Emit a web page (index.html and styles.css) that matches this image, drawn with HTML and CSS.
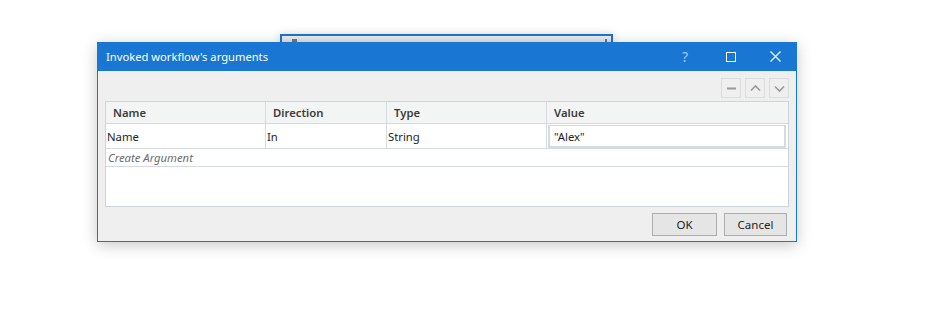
FILE: index.html
```html
<!DOCTYPE html>
<html>
<head>
    <title>Invoked workflow's arguments</title>
    <link rel="stylesheet" href="styles.css">
</head>
<body>
    <div class="back-window">
        <div class="back-inner">
            <span class="back-mark left"></span>
            <span class="back-mark right"></span>
        </div>
    </div>

    <div class="dialog">
        <div class="titlebar">
            <span class="title">Invoked workflow's arguments</span>
            <div class="win-buttons">
                <span class="win-btn help">?</span>
                <span class="win-btn">
                    <svg width="10" height="10" viewBox="0 0 10 10"><rect x="0.5" y="0.5" width="9" height="9" fill="none" stroke="#fff" stroke-width="1"/></svg>
                </span>
                <span class="win-btn">
                    <svg width="11" height="11" viewBox="0 0 11 11"><path d="M0.5 0.5 L10.5 10.5 M10.5 0.5 L0.5 10.5" stroke="#fff" stroke-width="1.1" fill="none"/></svg>
                </span>
            </div>
        </div>

        <div class="content">
            <div class="toolbar">
                <button class="tool-btn">
                    <svg width="11" height="11" viewBox="0 0 11 11"><rect x="1" y="4.5" width="9" height="2" fill="#9a9a9a"/></svg>
                </button>
                <button class="tool-btn">
                    <svg width="11" height="11" viewBox="0 0 11 11"><path d="M1 7.5 L5.5 3 L10 7.5" stroke="#9a9a9a" stroke-width="1.6" fill="none"/></svg>
                </button>
                <button class="tool-btn">
                    <svg width="11" height="11" viewBox="0 0 11 11"><path d="M1 3.5 L5.5 8 L10 3.5" stroke="#9a9a9a" stroke-width="1.6" fill="none"/></svg>
                </button>
            </div>

            <div class="grid">
                <div class="row header">
                    <div class="cell c-name">Name</div>
                    <div class="cell c-dir">Direction</div>
                    <div class="cell c-type">Type</div>
                    <div class="cell c-value">Value</div>
                </div>
                <div class="row data">
                    <div class="cell c-name">Name</div>
                    <div class="cell c-dir">In</div>
                    <div class="cell c-type">String</div>
                    <div class="cell c-value"><span class="edit">"Alex"</span></div>
                </div>
                <div class="row create">Create Argument</div>
            </div>

            <div class="actions">
                <button class="btn ok">OK</button>
                <button class="btn">Cancel</button>
            </div>
        </div>
    </div>
</body>
</html>
```

FILE: styles.css
```css
body {
    margin: 0;
    background: #ffffff;
    font-family: "Noto Sans", "Open Sans", sans-serif;
    font-size: 11.3px;
    color: #1e1e1e;
}
.back-window {
    position: absolute;
    left: 280px;
    top: 34px;
    width: 329px;
    height: 12px;
    border: 2px solid #1976d2;
    border-bottom: none;
    box-shadow: 0 0 10px rgba(0, 0, 0, 0.15);
}
.back-inner {
    height: 100%;
    background: linear-gradient(#eeeeee, #cfcfcf);
    position: relative;
}
.back-mark {
    position: absolute;
    top: 3px;
    width: 5px;
    height: 4px;
    background: #777;
}
.back-mark.left { left: 10px; }
.back-mark.right { right: 4px; width: 2px; }
.dialog {
    position: absolute;
    left: 97px;
    top: 42px;
    width: 698px;
    height: 198px;
    border: 1px solid #1976d2;
    background: #efefef;
    box-shadow: 0 3px 14px rgba(0, 0, 0, 0.22);
    display: flex;
    flex-direction: column;
}
.titlebar {
    height: 29px;
    background: #1976d2;
    color: #ffffff;
    display: flex;
    align-items: center;
    margin: -1px -1px 0 -1px;
    padding-left: 9px;
}
.title {
    flex: 1;
    font-size: 11.2px;
}
.win-buttons {
    display: flex;
    align-items: center;
    height: 100%;
}
.win-btn {
    width: 44px;
    height: 100%;
    display: flex;
    align-items: center;
    justify-content: center;
}
.win-btn.help {
    color: #a4c8ee;
    font-size: 14px;
    margin-right: 2px;
}
.content {
    flex: 1;
    display: flex;
    flex-direction: column;
    padding: 7px 7px 5px 7px;
}
.toolbar {
    display: flex;
    justify-content: flex-end;
    gap: 4px;
}
.tool-btn {
    width: 20px;
    height: 20px;
    padding: 0;
    border: 1px solid #dcdcdc;
    background: #efefef;
    display: flex;
    align-items: center;
    justify-content: center;
}
.grid {
    margin-top: 3px;
    height: 106px;
    border: 1px solid #ccd5dc;
    background: #ffffff;
    box-sizing: border-box;
}
.row {
    display: flex;
    border-bottom: 1px solid #d5dbe0;
}
.row.header {
    height: 21px;
    background: #f3f4f4;
    font-weight: 600;
    color: #3c3c3c;
}
.row.data {
    height: 24px;
}
.row.create {
    height: 17px;
    align-items: center;
    padding-left: 2px;
    font-style: italic;
    color: #6e6e6e;
}
.cell {
    display: flex;
    align-items: center;
    border-right: 1px solid #d5dbe0;
    box-sizing: border-box;
    white-space: nowrap;
}
.header .cell { padding-left: 7px; }
.data .cell { padding-left: 1px; }
.c-name { width: 160px; }
.c-dir { width: 121px; }
.c-type { width: 160px; }
.c-value { flex: 1; border-right: none; }
.data .c-value { padding: 1px 2px 0 1px; }
.edit {
    flex: 1;
    height: 100%;
    box-sizing: border-box;
    border: 2px solid #d3dce3;
    border-top-width: 1px;
    padding-left: 4px;
    display: flex;
    align-items: center;
}
.actions {
    margin-top: auto;
    display: flex;
    justify-content: flex-end;
    gap: 7px;
    margin-right: 2px;
}
.btn {
    height: 23px;
    width: 63px;
    border: 1px solid #adadad;
    background: #e5e5e5;
    font-family: "Noto Sans", "Open Sans", sans-serif;
    font-size: 11.5px;
    color: #1e1e1e;
    padding: 0;
}
.btn.ok { width: 65px; }
```
